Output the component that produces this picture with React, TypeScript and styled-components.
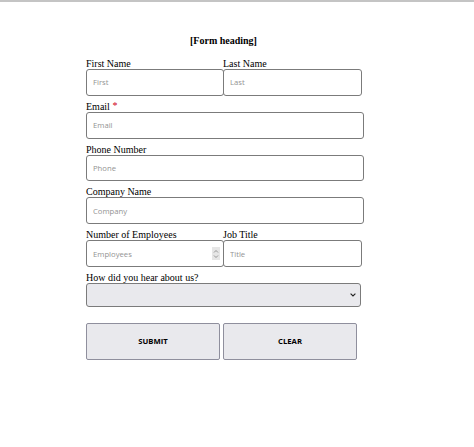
import React from "react";
import styled, { createGlobalStyle } from "styled-components";

const Global = createGlobalStyle`
  html, body { margin: 0; padding: 0; background: #ffffff; }
  body { font-family: "Liberation Serif", "Times New Roman", serif; color: #000; }
  * { box-sizing: border-box; }
`;

const TopRule = styled.div`
  height: 2px;
  background: #c4c4c4;
`;

const Form = styled.form`
  width: 278px;
  margin-left: 86px;
  padding-top: 33px;
  display: flex;
  flex-direction: column;
`;

const Heading = styled.h2`
  margin: 0 0 6px 0;
  width: 275px;
  text-align: center;
  font: bold 10px/12px "Liberation Serif", "Times New Roman", serif;
`;

const Row = styled.div`
  display: grid;
  grid-template-columns: 138px 138px;
`;

const Field = styled.div<{ $shift?: boolean }>`
  display: flex;
  flex-direction: column;
  margin-left: ${(p) => (p.$shift ? "-1px" : "0")};
  position: relative;
`;

const Label = styled.label`
  display: block;
  padding-top: 5px;
  font: 10px/11px "Liberation Serif", "Times New Roman", serif;
  white-space: nowrap;
`;

const Req = styled.span`
  color: #d0021b;
  font-size: 10px;
  position: relative;
  top: -1px;
`;

const Input = styled.input`
  width: 100%;
  height: 26.8px;
  margin: 0;
  border: 1px solid #7b7b7b;
  border-radius: 3px;
  padding: 0 6px;
  background: #fff;
  font: 7.7px "Open Sans", "Noto Sans", sans-serif;
  color: #222;
  outline: none;
  &::placeholder { color: #939393; }
`;

const InputWrap = styled.div`
  position: relative;
  width: 100%;
`;

const Spinner = styled.span`
  position: absolute;
  right: 4px;
  top: 7px;
  width: 8px;
  height: 13px;
  background: #e6e6e6;
  display: flex;
  align-items: center;
  justify-content: center;
`;

const SelectWrap = styled.div`
  position: relative;
  width: 275px;
`;

const Select = styled.select`
  appearance: none;
  -webkit-appearance: none;
  width: 275px;
  height: 24px;
  margin: 0;
  border: 1px solid #7b7b7b;
  border-radius: 3px;
  background: #e9e9ed;
  font: 7.5px "Open Sans", sans-serif;
  outline: none;
`;

const Chevron = styled.svg`
  position: absolute;
  right: 5px;
  top: 10px;
  pointer-events: none;
`;

const Buttons = styled.div`
  display: flex;
  gap: 3px;
  margin-top: 16px;
`;

const Button = styled.button`
  width: 134px;
  height: 37px;
  margin: 0;
  border: 1px solid #8f8f9d;
  border-radius: 2px;
  background: #e9e9ed;
  font: bold 7.7px "Open Sans", "Noto Sans", sans-serif;
  color: #000;
`;

export default function App() {
  return (
    <>
      <Global />
      <TopRule />
      <Form onSubmit={(e) => e.preventDefault()}>
        <Heading>[Form heading]</Heading>
        <Row>
          <Field>
            <Label>First Name</Label>
            <Input placeholder="First" />
          </Field>
          <Field $shift>
            <Label>Last Name</Label>
            <Input placeholder="Last" />
          </Field>
        </Row>
        <Field>
          <Label>
            Email <Req>*</Req>
          </Label>
          <Input placeholder="Email" />
        </Field>
        <Field>
          <Label>Phone Number</Label>
          <Input placeholder="Phone" />
        </Field>
        <Field>
          <Label>Company Name</Label>
          <Input placeholder="Company" />
        </Field>
        <Row>
          <Field>
            <Label>Number of Employees</Label>
            <InputWrap>
              <Input placeholder="Employees" />
              <Spinner>
                <svg width="6" height="10" viewBox="0 0 6 10">
                  <path d="M1 3.5 L3 1.5 L5 3.5" fill="none" stroke="#8a8a8a" strokeWidth="0.9" />
                  <path d="M1 6.5 L3 8.5 L5 6.5" fill="none" stroke="#8a8a8a" strokeWidth="0.9" />
                </svg>
              </Spinner>
            </InputWrap>
          </Field>
          <Field $shift>
            <Label>Job Title</Label>
            <Input placeholder="Title" />
          </Field>
        </Row>
        <Field>
          <Label>How did you hear about us?</Label>
          <SelectWrap>
            <Select defaultValue="">
              <option value=""></option>
            </Select>
            <Chevron width="6" height="4" viewBox="0 0 6 4">
              <path d="M0.6 0.6 L3 3 L5.4 0.6" fill="none" stroke="#222" strokeWidth="1.1" />
            </Chevron>
          </SelectWrap>
        </Field>
        <Buttons>
          <Button type="submit">SUBMIT</Button>
          <Button type="button">CLEAR</Button>
        </Buttons>
      </Form>
    </>
  );
}
